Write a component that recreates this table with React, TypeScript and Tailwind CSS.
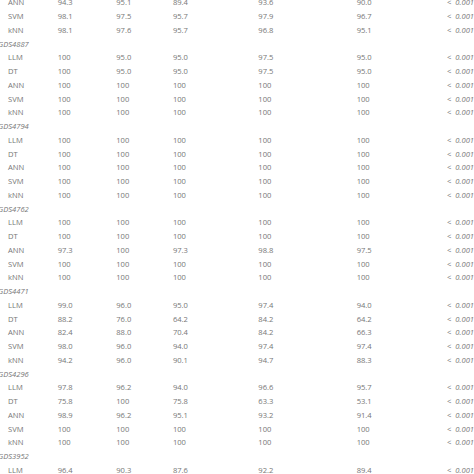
const groups: { name: string; rows: [string, string, string, string, string, string][] }[] = [
  {
    name: "",
    rows: [
      ["ANN", "94.3", "95.1", "89.4", "93.6", "90.0"],
      ["SVM", "98.1", "97.5", "95.7", "97.9", "96.7"],
      ["kNN", "98.1", "97.6", "95.7", "96.8", "95.1"],
    ],
  },
  {
    name: "GDS4887",
    rows: [
      ["LLM", "100", "95.0", "95.0", "97.5", "95.0"],
      ["DT", "100", "95.0", "95.0", "97.5", "95.0"],
      ["ANN", "100", "100", "100", "100", "100"],
      ["SVM", "100", "100", "100", "100", "100"],
      ["kNN", "100", "100", "100", "100", "100"],
    ],
  },
  {
    name: "GDS4794",
    rows: [
      ["LLM", "100", "100", "100", "100", "100"],
      ["DT", "100", "100", "100", "100", "100"],
      ["ANN", "100", "100", "100", "100", "100"],
      ["SVM", "100", "100", "100", "100", "100"],
      ["kNN", "100", "100", "100", "100", "100"],
    ],
  },
  {
    name: "GDS4762",
    rows: [
      ["LLM", "100", "100", "100", "100", "100"],
      ["DT", "100", "100", "100", "100", "100"],
      ["ANN", "97.3", "100", "97.3", "98.8", "97.5"],
      ["SVM", "100", "100", "100", "100", "100"],
      ["kNN", "100", "100", "100", "100", "100"],
    ],
  },
  {
    name: "GDS4471",
    rows: [
      ["LLM", "99.0", "96.0", "95.0", "97.4", "94.0"],
      ["DT", "88.2", "76.0", "64.2", "84.2", "64.2"],
      ["ANN", "82.4", "88.0", "70.4", "84.2", "66.3"],
      ["SVM", "98.0", "96.0", "94.0", "97.4", "97.4"],
      ["kNN", "94.2", "96.0", "90.1", "94.7", "88.3"],
    ],
  },
  {
    name: "GDS4296",
    rows: [
      ["LLM", "97.8", "96.2", "94.0", "96.6", "95.7"],
      ["DT", "75.8", "100", "75.8", "63.3", "53.1"],
      ["ANN", "98.9", "96.2", "95.1", "93.2", "91.4"],
      ["SVM", "100", "100", "100", "100", "100"],
      ["kNN", "100", "100", "100", "100", "100"],
    ],
  },
  {
    name: "GDS3952",
    rows: [["LLM", "96.4", "90.3", "87.6", "92.2", "89.4"]],
  },
];

function Row({ r }: { r: [string, string, string, string, string, string] }) {
  return (
    <div className="flex h-[13.76px] items-center whitespace-nowrap">
      <span className="w-[58px] pl-[8px]">{r[0]}</span>
      <span className="w-[59px]">{r[1]}</span>
      <span className="w-[57px]">{r[2]}</span>
      <span className="w-[86px]">{r[3]}</span>
      <span className="w-[99px]">{r[4]}</span>
      <span className="w-[91px]">{r[5]}</span>
      <span>
        &lt;&nbsp;&nbsp;<span className="italic">0.001</span>
      </span>
    </div>
  );
}

export default function App() {
  return (
    <div className="h-[474px] w-[474px] overflow-hidden bg-white">
      <div className="-mt-[3.9px] text-[7.6px] text-[#777] [font-family:'Open_Sans',sans-serif]">
        {groups.map((g, i) => (
          <div key={i}>
            {g.name && (
              <div className="flex h-[13.76px] items-center -ml-[2px] italic whitespace-nowrap">{g.name}</div>
            )}
            {g.rows.map((r, j) => (
              <Row key={j} r={r} />
            ))}
          </div>
        ))}
      </div>
    </div>
  );
}
